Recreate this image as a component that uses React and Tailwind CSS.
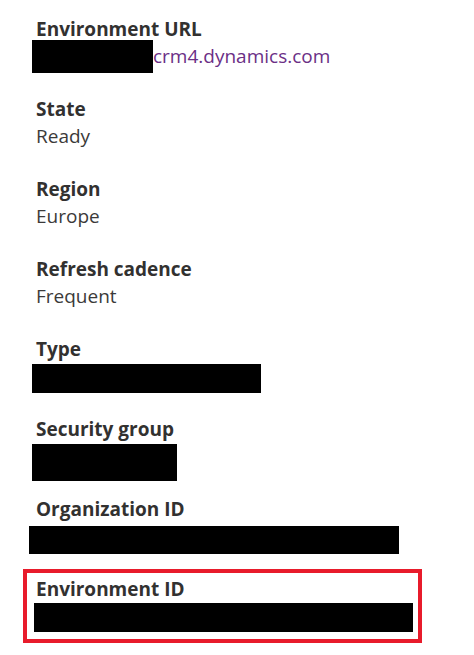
import React from 'react';

const fields = [
  { label: 'Environment URL', value: 'crm4.dynamics.com', link: true, redact: 'top-[-3px] left-[-4px] w-[121px] h-[33px]' },
  { label: 'State', value: 'Ready' },
  { label: 'Region', value: 'Europe' },
  { label: 'Refresh cadence', value: 'Frequent' },
  { label: 'Type', redact: 'top-[1px] left-[-4px] w-[229px] h-[29px]' },
  { label: 'Security group', redact: 'top-[1px] left-[-4px] w-[145px] h-[37px]' },
  { label: 'Organization ID', redact: 'top-[3px] left-[-7px] w-[370px] h-[28px]' },
];

const Field = ({ field }) => (
  <div className="flex flex-col">
    <div className="h-[27px] leading-[27px] font-bold text-[#323130]">{field.label}</div>
    <div className="relative h-[27px] leading-[27px] text-[#3b3a39] flex">
      {field.link && <span className="w-[117px] shrink-0"></span>}
      {field.value && (
        <span className={field.link ? 'text-[#6b2f86]' : ''}>{field.value}</span>
      )}
      {field.redact && <div className={`absolute bg-black ${field.redact}`}></div>}
    </div>
  </div>
);

export default function App() {
  return (
    <div
      className="w-[474px] h-[655px] bg-white overflow-hidden pt-[16px] pl-[36px] text-[19px]"
      style={{ fontFamily: '"Open Sans", "Noto Sans", sans-serif' }}
    >
      <div className="flex flex-col gap-[26px]">
        {fields.map((f) => (
          <Field key={f.label} field={f} />
        ))}
        <div className="-mt-[7px] -ml-[13px] w-[399px] border-4 border-[#e81b2b] pt-[3px] pl-[9px] pb-[9px]">
          <div className="h-[27px] leading-[27px] font-bold text-[#323130]">Environment ID</div>
          <div className="relative h-[27px]">
            <div className="absolute bg-black top-[0px] left-[-2px] w-[379px] h-[29px]"></div>
          </div>
        </div>
      </div>
    </div>
  );
}
